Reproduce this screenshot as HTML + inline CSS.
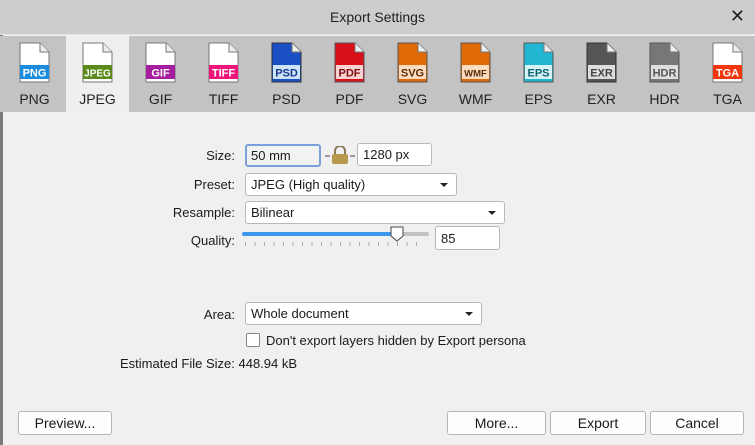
<!DOCTYPE html>
<html><head><meta charset="utf-8"><style>
*{box-sizing:border-box;margin:0;padding:0}
body{width:755px;height:445px;background:#f0f0f0;font-family:"Liberation Sans",sans-serif;font-size:13px;color:#1a1a1a;position:relative;overflow:hidden}
.abs{position:absolute}
#title{left:0;top:0;width:755px;height:35px;background:#cdcdcd;border-bottom:1px solid #e4e4e4}
#title .t{position:absolute;left:0;width:755px;top:9px;text-align:center;font-size:14px;color:#222}
#title .x{position:absolute;right:10px;top:6px;font-size:18px;color:#222}
#tabs{left:0;top:36px;width:755px;height:76px;background:#c3c3c3}
.tab{position:absolute;top:0;width:63px;height:76px;text-align:center}
.tab.sel{background:#efefef}
.tab svg{position:absolute;left:16px;top:6px}
.tab span{position:absolute;left:0;width:63px;top:55px;font-size:14px;color:#222}
#leftb{left:0;top:0;width:3px;height:445px;background:#7a7a7a}
.lbl{position:absolute;text-align:right;width:120px}
.field{position:absolute;background:#fff;border:1px solid #b9b9b9;border-radius:3px;padding:3px 5px;height:23px;font-size:13px}
.sel2:after{content:"";position:absolute;right:8px;top:9px;border-left:4px solid transparent;border-right:4px solid transparent;border-top:4px solid #222}
.btn{position:absolute;top:411px;height:24px;background:#fdfdfd;border:1px solid #b5b5b5;border-radius:3px;text-align:center;line-height:22px;font-size:14px}
</style></head><body>
<div id="leftb" class="abs"></div>
<div id="title" class="abs"><div class="t">Export Settings</div><div class="x">✕</div></div>
<div id="tabs" class="abs">
<div class="tab" style="left:3px"><svg width="32" height="42"><path d="M1 1H21L30 10V40H1Z" fill="#fff" stroke="#777"/><path d="M21 1V10H30" fill="#eee" stroke="#777"/><rect x="1" y="23" width="29" height="14" fill="#1a8de0"/><text x="15.5" y="34.5" text-anchor="middle" font-family="Liberation Sans" font-weight="bold" font-size="11" fill="#fff">PNG</text></svg><span>PNG</span></div>
<div class="tab sel" style="left:66px"><svg width="32" height="42"><path d="M1 1H21L30 10V40H1Z" fill="#fff" stroke="#777"/><path d="M21 1V10H30" fill="#eee" stroke="#777"/><rect x="1" y="23" width="29" height="14" fill="#5a8a1a"/><text x="15.5" y="34.5" text-anchor="middle" font-family="Liberation Sans" font-weight="bold" font-size="10" fill="#fff">JPEG</text></svg><span>JPEG</span></div>
<div class="tab" style="left:129px"><svg width="32" height="42"><path d="M1 1H21L30 10V40H1Z" fill="#fff" stroke="#777"/><path d="M21 1V10H30" fill="#eee" stroke="#777"/><rect x="1" y="23" width="29" height="14" fill="#a61ea0"/><text x="15.5" y="34.5" text-anchor="middle" font-family="Liberation Sans" font-weight="bold" font-size="11" fill="#fff">GIF</text></svg><span>GIF</span></div>
<div class="tab" style="left:192px"><svg width="32" height="42"><path d="M1 1H21L30 10V40H1Z" fill="#fff" stroke="#777"/><path d="M21 1V10H30" fill="#eee" stroke="#777"/><rect x="1" y="23" width="29" height="14" fill="#f0157a"/><text x="15.5" y="34.5" text-anchor="middle" font-family="Liberation Sans" font-weight="bold" font-size="11" fill="#fff">TIFF</text></svg><span>TIFF</span></div>
<div class="tab" style="left:255px"><svg width="32" height="42"><path d="M1 1H21L30 10V40H1Z" fill="#1b4fc4" stroke="#333"/><path d="M21 1V10H30" fill="#eee" stroke="#777"/><rect x="2" y="23" width="27" height="14" fill="#cfe3f8"/><text x="15.5" y="34.5" text-anchor="middle" font-family="Liberation Sans" font-weight="bold" font-size="11" fill="#143a8c">PSD</text></svg><span>PSD</span></div>
<div class="tab" style="left:318px"><svg width="32" height="42"><path d="M1 1H21L30 10V40H1Z" fill="#d8101a" stroke="#555"/><path d="M21 1V10H30" fill="#eee" stroke="#777"/><rect x="2" y="23" width="27" height="14" fill="#fcd3d3"/><text x="15.5" y="34.5" text-anchor="middle" font-family="Liberation Sans" font-weight="bold" font-size="11" fill="#7a0c0c">PDF</text></svg><span>PDF</span></div>
<div class="tab" style="left:381px"><svg width="32" height="42"><path d="M1 1H21L30 10V40H1Z" fill="#e06a08" stroke="#555"/><path d="M21 1V10H30" fill="#eee" stroke="#777"/><rect x="2" y="23" width="27" height="14" fill="#fbdcc0"/><text x="15.5" y="34.5" text-anchor="middle" font-family="Liberation Sans" font-weight="bold" font-size="11" fill="#5a2a05">SVG</text></svg><span>SVG</span></div>
<div class="tab" style="left:444px"><svg width="32" height="42"><path d="M1 1H21L30 10V40H1Z" fill="#e06a08" stroke="#555"/><path d="M21 1V10H30" fill="#eee" stroke="#777"/><rect x="2" y="23" width="27" height="14" fill="#fbdcc0"/><text x="15.5" y="34.5" text-anchor="middle" font-family="Liberation Sans" font-weight="bold" font-size="9.5" fill="#5a2a05">WMF</text></svg><span>WMF</span></div>
<div class="tab" style="left:507px"><svg width="32" height="42"><path d="M1 1H21L30 10V40H1Z" fill="#22b6d2" stroke="#555"/><path d="M21 1V10H30" fill="#eee" stroke="#777"/><rect x="2" y="23" width="27" height="14" fill="#d3f1f7"/><text x="15.5" y="34.5" text-anchor="middle" font-family="Liberation Sans" font-weight="bold" font-size="11" fill="#10606e">EPS</text></svg><span>EPS</span></div>
<div class="tab" style="left:570px"><svg width="32" height="42"><path d="M1 1H21L30 10V40H1Z" fill="#555" stroke="#333"/><path d="M21 1V10H30" fill="#eee" stroke="#777"/><rect x="2" y="23" width="27" height="14" fill="#ddd"/><text x="15.5" y="34.5" text-anchor="middle" font-family="Liberation Sans" font-weight="bold" font-size="11" fill="#444">EXR</text></svg><span>EXR</span></div>
<div class="tab" style="left:633px"><svg width="32" height="42"><path d="M1 1H21L30 10V40H1Z" fill="#777" stroke="#555"/><path d="M21 1V10H30" fill="#eee" stroke="#777"/><rect x="2" y="23" width="27" height="14" fill="#ddd"/><text x="15.5" y="34.5" text-anchor="middle" font-family="Liberation Sans" font-weight="bold" font-size="11" fill="#555">HDR</text></svg><span>HDR</span></div>
<div class="tab" style="left:696px"><svg width="32" height="42"><path d="M1 1H21L30 10V40H1Z" fill="#fff" stroke="#777"/><path d="M21 1V10H30" fill="#eee" stroke="#777"/><rect x="1" y="23" width="29" height="14" fill="#f0360a"/><text x="15.5" y="34.5" text-anchor="middle" font-family="Liberation Sans" font-weight="bold" font-size="11" fill="#fff">TGA</text></svg><span>TGA</span></div>
</div>

<div class="lbl" style="left:115px;top:148px">Size:</div>
<div class="field" style="left:245px;top:144px;width:76px;background:#f2f2f2;border:2px solid #7aa2d8;padding:2px 4px">50 mm</div>
<svg class="abs" style="left:324px;top:146px" width="32" height="20"><line x1="1" y1="10" x2="6" y2="10" stroke="#444"/><line x1="26" y1="10" x2="31" y2="10" stroke="#444"/><path d="M11 8V5a5 5 0 0 1 10 0V8" fill="none" stroke="#8a7a5a" stroke-width="2"/><rect x="8" y="8" width="16" height="10" rx="2" fill="#b89a4e"/></svg>
<div class="field" style="left:357px;top:143px;width:75px">1280 px</div>
<div class="lbl" style="left:115px;top:177px">Preset:</div>
<div class="field sel2" style="left:245px;top:173px;width:212px">JPEG (High quality)</div>
<div class="lbl" style="left:115px;top:205px">Resample:</div>
<div class="field sel2" style="left:245px;top:201px;width:260px">Bilinear</div>
<div class="lbl" style="left:115px;top:233px">Quality:</div>
<div class="abs" style="left:242px;top:232px;width:187px;height:4px;background:#c2c2c2;border-radius:2px"></div>
<div class="abs" style="left:242px;top:232px;width:156px;height:4px;background:#3a96ee;border-radius:2px"></div>
<svg class="abs" style="left:390px;top:226px" width="14" height="16"><path d="M1 1H13V10L7 15L1 10Z" fill="#fff" stroke="#444"/></svg>
<div class="abs" style="left:245px;top:242px;width:180px;height:4px;background:repeating-linear-gradient(90deg,#aaa 0 1px,transparent 1px 9.5px)"></div>
<div class="field" style="left:435px;top:226px;width:65px;height:24px;padding-top:4px">85</div>

<div class="lbl" style="left:115px;top:307px">Area:</div>
<div class="field sel2" style="left:245px;top:302px;width:237px">Whole document</div>
<div class="abs" style="left:246px;top:333px;width:14px;height:14px;border:1px solid #888;border-radius:2px;background:#fff"></div>
<div class="abs" style="left:266px;top:333px">Don't export layers hidden by Export persona</div>
<div class="abs" style="left:120px;top:356px">Estimated File Size: 448.94 kB</div>

<div class="btn" style="left:18px;width:94px">Preview...</div>
<div class="btn" style="left:447px;width:99px">More...</div>
<div class="btn" style="left:550px;width:96px">Export</div>
<div class="btn" style="left:650px;width:94px">Cancel</div>
</body></html>
